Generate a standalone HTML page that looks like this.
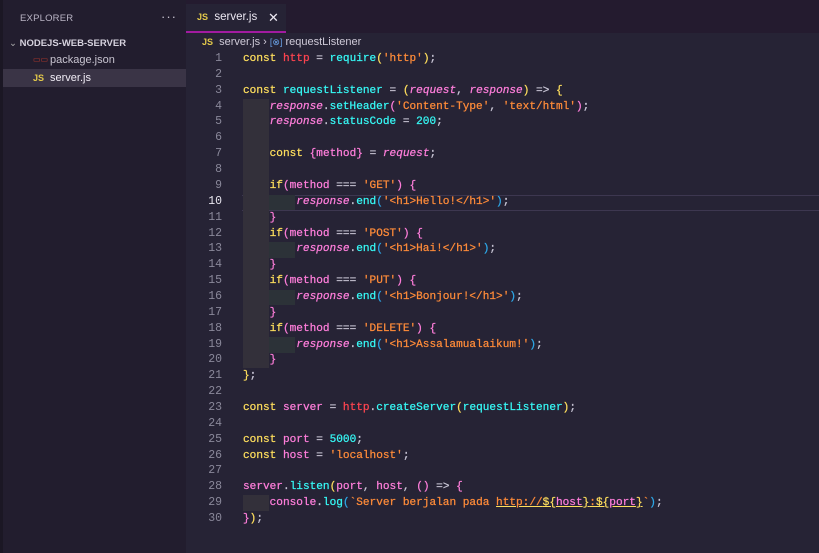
<!DOCTYPE html>
<html><head><meta charset="utf-8"><style>
*{margin:0;padding:0;box-sizing:border-box}
body{width:819px;height:553px;overflow:hidden;background:#262335;font-family:"Liberation Sans",sans-serif;position:relative}
#side{position:absolute;left:0;top:0;width:186px;height:553px;background:#221d2e;border-left:3px solid #1b1724}
#side .t{position:absolute;left:17px;top:13px;font-size:9.5px;color:#b9b4c4;letter-spacing:.2px}
#side .dots{position:absolute;left:158px;top:9px;color:#c8c3d0;font-size:13px;letter-spacing:1px}
#side .proj{position:absolute;left:6px;top:38px;font-size:9.5px;font-weight:bold;color:#d6d2de}
.row{position:absolute;left:0;width:183px;height:18px;font-size:11px;color:#c8c4d0;line-height:18px}
.js{color:#e3c94a;font-weight:bold;font-size:9px;font-family:"Liberation Sans",sans-serif}
#tabbar{position:absolute;left:186px;top:0;width:633px;height:33px;background:#241b2f}
#tab{position:absolute;left:0;top:4px;width:100px;height:29px;background:#262335;border-bottom:2px solid #a21ba0;font-size:11.5px;color:#ece8f2;line-height:27px;padding-left:11px}
#bc{position:absolute;left:202px;top:36px;font-size:11px;color:#cfcad8}
.ln{position:absolute;left:186px;width:36px;text-align:right;font-family:"Liberation Mono",monospace;font-size:11.5px;color:#8a889a;height:16px;line-height:16px}
.cl{position:absolute;left:243px;font-family:"Liberation Mono",monospace;font-size:11.1px;color:#c9c6d6;height:16px;line-height:16px;white-space:pre;-webkit-text-stroke:0.25px currentColor}
.k{color:#fede5d}.c{color:#36f9f6}.s{color:#ff8b39}.p{color:#ff7edb;font-style:italic}.v{color:#ff7edb}.r{color:#fe4450}
.b1{color:#fede5d}.b2{color:#ff7edb}.b3{color:#2ea8e8}.w{color:#e8e6ef}
.g1{position:absolute;left:243px;width:26px;background:#33303a}
.g2{position:absolute;left:269px;width:26px;background:#2c3238}
</style></head><body>
<div id="side">
<div class="t">EXPLORER</div><div class="dots">···</div>
<div class="proj"><span style="font-weight:normal;color:#aaa">⌄</span> NODEJS-WEB-SERVER</div>
<div class="row" style="top:51px"><span style="position:absolute;left:30px;color:#c0392b;font-size:8px">▭▭</span><span style="position:absolute;left:47px">package.json</span></div>
<div class="row" style="top:69px;background:#3a3446"><span class="js" style="position:absolute;left:30px">JS</span><span style="position:absolute;left:47px;color:#f0ecf5">server.js</span></div>
</div>
<div id="tabbar"><div id="tab"><span class="js">JS</span>&nbsp; server.js <span style="position:absolute;left:82px;font-size:13px">✕</span></div></div>
<div id="bc"><span class="js">JS</span>&nbsp; server.js › <span style="color:#6aa2e8;font-size:9px">[⊗]</span> requestListener</div>
<div style="position:absolute;left:242px;top:194.5px;width:577px;height:16px;border-top:1px solid #3d3750;border-bottom:1px solid #3d3750"></div>
<div class="g1" style="top:98.6px;height:269px"></div>
<div class="g1" style="top:495px;height:16px"></div>
<div class="g2" style="top:194.5px;height:15.9px"></div>
<div class="g2" style="top:242px;height:15.9px"></div>
<div class="g2" style="top:289.6px;height:15.9px"></div>
<div class="g2" style="top:337.2px;height:15.9px"></div>
<div id="code"></div>
<script>
const L=[
'<span class="k">const</span> <span class="r">http</span> = <span class="c">require</span><span class="b1">(</span><span class="s">\'http\'</span><span class="b1">)</span>;',
'',
'<span class="k">const</span> <span class="c">requestListener</span> = <span class="b1">(</span><span class="p">request</span>, <span class="p">response</span><span class="b1">)</span> => <span class="b1">{</span>',
'    <span class="p">response</span>.<span class="c">setHeader</span><span class="b2">(</span><span class="s">\'Content-Type\'</span>, <span class="s">\'text/html\'</span><span class="b2">)</span>;',
'    <span class="p">response</span>.<span class="c">statusCode</span> = <span class="c">200</span>;',
'',
'    <span class="k">const</span> <span class="b2">{</span><span class="v">method</span><span class="b2">}</span> = <span class="p">request</span>;',
'',
'    <span class="k">if</span><span class="b2">(</span><span class="v">method</span> === <span class="s">\'GET\'</span><span class="b2">)</span> <span class="b2">{</span>',
'        <span class="p">response</span>.<span class="c">end</span><span class="b3">(</span><span class="s">\'&lt;h1&gt;Hello!&lt;/h1&gt;\'</span><span class="b3">)</span>;',
'    <span class="b2">}</span>',
'    <span class="k">if</span><span class="b2">(</span><span class="v">method</span> === <span class="s">\'POST\'</span><span class="b2">)</span> <span class="b2">{</span>',
'        <span class="p">response</span>.<span class="c">end</span><span class="b3">(</span><span class="s">\'&lt;h1&gt;Hai!&lt;/h1&gt;\'</span><span class="b3">)</span>;',
'    <span class="b2">}</span>',
'    <span class="k">if</span><span class="b2">(</span><span class="v">method</span> === <span class="s">\'PUT\'</span><span class="b2">)</span> <span class="b2">{</span>',
'        <span class="p">response</span>.<span class="c">end</span><span class="b3">(</span><span class="s">\'&lt;h1&gt;Bonjour!&lt;/h1&gt;\'</span><span class="b3">)</span>;',
'    <span class="b2">}</span>',
'    <span class="k">if</span><span class="b2">(</span><span class="v">method</span> === <span class="s">\'DELETE\'</span><span class="b2">)</span> <span class="b2">{</span>',
'        <span class="p">response</span>.<span class="c">end</span><span class="b3">(</span><span class="s">\'&lt;h1&gt;Assalamualaikum!\'</span><span class="b3">)</span>;',
'    <span class="b2">}</span>',
'<span class="b1">}</span>;',
'',
'<span class="k">const</span> <span class="v">server</span> = <span class="r">http</span>.<span class="c">createServer</span><span class="b1">(</span><span class="c">requestListener</span><span class="b1">)</span>;',
'',
'<span class="k">const</span> <span class="v">port</span> = <span class="c">5000</span>;',
'<span class="k">const</span> <span class="v">host</span> = <span class="s">\'localhost\'</span>;',
'',
'<span class="v">server</span>.<span class="c">listen</span><span class="b1">(</span><span class="v">port</span>, <span class="v">host</span>, <span class="b2">()</span> => <span class="b2">{</span>',
'    <span class="v">console</span>.<span class="c">log</span><span class="b3">(</span><span class="s">`Server berjalan pada <u style="text-decoration-color:#fede5d">http://<span class="k">${</span><span class="v">host</span><span class="k">}</span>:<span class="k">${</span><span class="v">port</span><span class="k">}</span></u>`</span><span class="b3">)</span>;',
'<span class="b2">}</span><span class="b1">)</span>;'];
let h='';
L.forEach((s,i)=>{const t=(51+i*15.86).toFixed(1);
h+=`<div class="ln" style="top:${t}px;${i==9?'color:#e8e6ef':''}">${i+1}</div><div class="cl" style="top:${t}px">${s}</div>`;});
document.getElementById('code').innerHTML=h;
</script>
</body></html>
